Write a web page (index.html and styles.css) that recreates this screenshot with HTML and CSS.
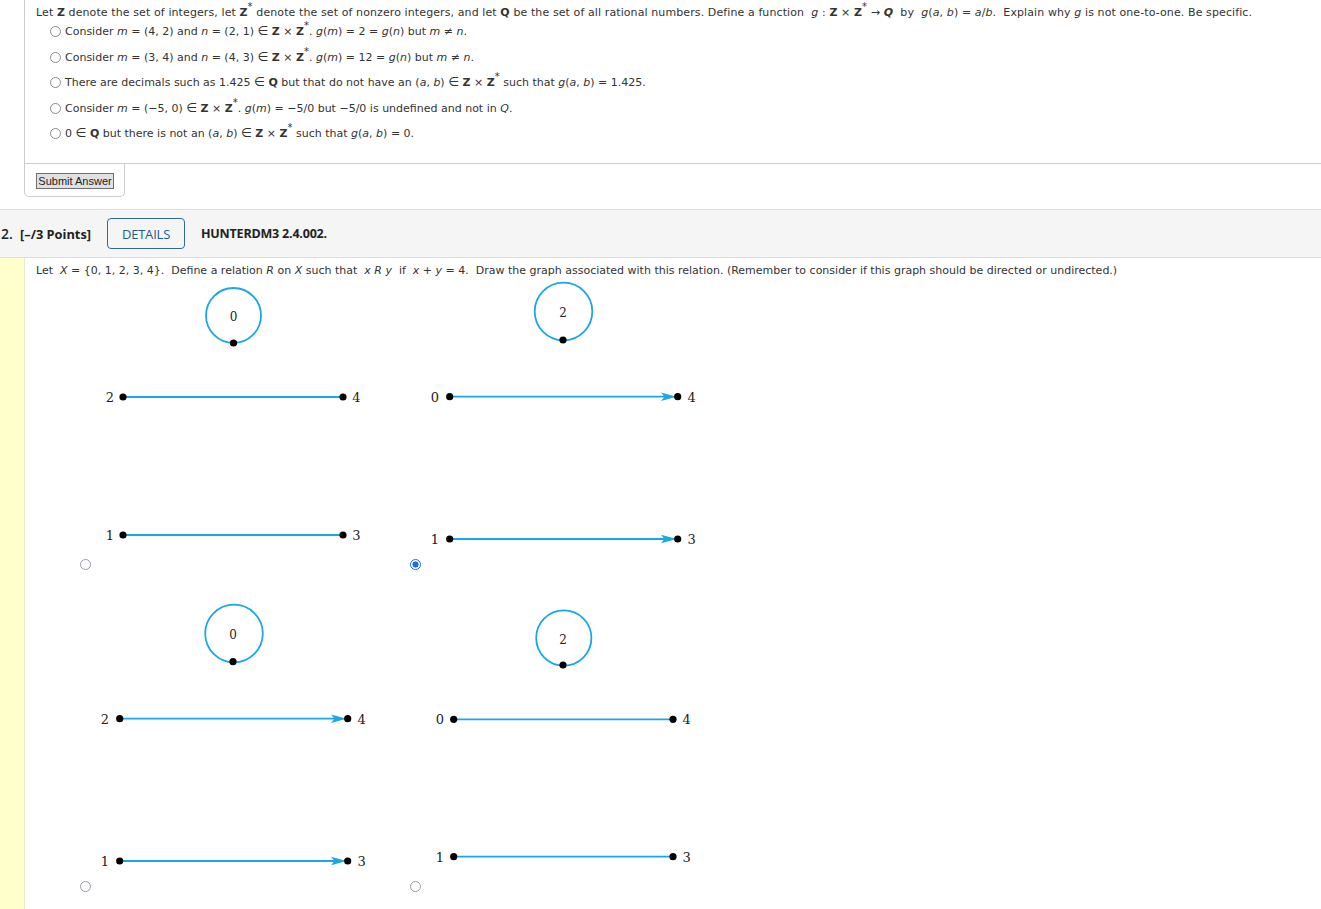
FILE: index.html
```html
<!DOCTYPE html>
<html>
<head>
<meta charset="utf-8">
<link rel="stylesheet" href="styles.css">
</head>
<body>
<div class="q1">
  <div class="q1-body">
    <p class="prompt wide">Let <b>Z</b> denote the set of integers, let <b>Z</b><sup>*</sup> denote the set of nonzero integers, and let <b>Q</b> be the set of all rational numbers. Define a function &nbsp;<i>g</i> : <b>Z</b> × <b>Z</b><sup>*</sup> → <b><i>Q</i></b>&nbsp; by &nbsp;<i>g</i>(<i>a</i>, <i>b</i>) = <i>a</i>/<i>b</i>.&nbsp; Explain why <i>g</i> is not one-to-one. Be specific.</p>
    <ul class="options">
      <li><input type="radio" name="q1" class="radio"><span>Consider <i>m</i> = (4, 2) and <i>n</i> = (2, 1) <span class="in">∈</span> <b>Z</b> × <b>Z</b><sup>*</sup>. <i>g</i>(<i>m</i>) = 2 = <i>g</i>(<i>n</i>) but <i>m</i> ≠ <i>n</i>.</span></li>
      <li><input type="radio" name="q1" class="radio"><span>Consider <i>m</i> = (3, 4) and <i>n</i> = (4, 3) <span class="in">∈</span> <b>Z</b> × <b>Z</b><sup>*</sup>. <i>g</i>(<i>m</i>) = 12 = <i>g</i>(<i>n</i>) but <i>m</i> ≠ <i>n</i>.</span></li>
      <li><input type="radio" name="q1" class="radio"><span>There are decimals such as 1.425 <span class="in">∈</span> <b>Q</b> but that do not have an (<i>a</i>, <i>b</i>) <span class="in">∈</span> <b>Z</b> × <b>Z</b><sup>*</sup> such that <i>g</i>(<i>a</i>, <i>b</i>) = 1.425.</span></li>
      <li><input type="radio" name="q1" class="radio"><span>Consider <i>m</i> = (−5, 0) <span class="in">∈</span> <b>Z</b> × <b>Z</b><sup>*</sup>. <i>g</i>(<i>m</i>) = −5/0 but −5/0 is undefined and not in <i>Q</i>.</span></li>
      <li><input type="radio" name="q1" class="radio"><span>0 <span class="in">∈</span> <b>Q</b> but there is not an (<i>a</i>, <i>b</i>) <span class="in">∈</span> <b>Z</b> × <b>Z</b><sup>*</sup> such that <i>g</i>(<i>a</i>, <i>b</i>) = 0.</span></li>
    </ul>
  </div>
  <div class="submit-box"><button class="submit">Submit Answer</button></div>
</div>

<div class="q2-header">
  <span class="qnum">2.</span>
  <span class="points">[–/3 Points]</span>
  <span class="details">DETAILS</span>
  <span class="code">HUNTERDM3 2.4.002.</span>
</div>

<div class="q2">
  <div class="flag"></div>
  <div class="q2-body">
    <p class="prompt">Let &nbsp;<i>X</i> = {0, 1, 2, 3, 4}.&nbsp; Define a relation <i>R</i> on <i>X</i> such that &nbsp;<i>x R y</i>&nbsp; if &nbsp;<i>x</i> + <i>y</i> = 4.&nbsp; Draw the graph associated with this relation. (Remember to consider if this graph should be directed or undirected.)</p>
    <div class="graphs">
      <div class="cell">
        <svg class="graph" width="330" height="276" viewBox="0 0 330 276">
          <circle class="edge" cx="158.5" cy="35.5" r="27.5"/>
          <circle class="node" cx="158.5" cy="63" r="3.6"/>
          <text class="lbl-in" x="158.5" y="40.5">0</text>
          <line class="edge" x1="48" y1="117" x2="268" y2="117"/>
          <circle class="node" cx="48" cy="117" r="3.6"/>
          <circle class="node" cx="268" cy="117" r="3.6"/>
          <text class="lbl" x="35" y="122">2</text>
          <text class="lbl" x="281.5" y="122">4</text>
          <line class="edge" x1="48" y1="255" x2="268" y2="255"/>
          <circle class="node" cx="48" cy="255" r="3.6"/>
          <circle class="node" cx="268" cy="255" r="3.6"/>
          <text class="lbl" x="35" y="260">1</text>
          <text class="lbl" x="281.5" y="260">3</text>
        </svg>
        <input type="radio" name="q2" class="radio small">
      </div>
      <div class="cell">
        <svg class="graph" width="330" height="276" viewBox="0 0 330 276">
          <circle class="edge" cx="158.5" cy="31.5" r="28.8"/>
          <circle class="node" cx="158" cy="60" r="3.6"/>
          <text class="lbl-in" x="158" y="36.5">2</text>
          <line class="edge" x1="44.7" y1="116.7" x2="262" y2="116.7"/>
          <polygon class="arrow" points="271.5,116.7 256,112.5 259.5,116.7 256,121"/>
          <circle class="node" cx="44.7" cy="116.7" r="3.6"/>
          <circle class="node" cx="272.7" cy="116.7" r="3.6"/>
          <text class="lbl" x="30" y="121.7">0</text>
          <text class="lbl" x="286.7" y="121.7">4</text>
          <line class="edge" x1="44.7" y1="259" x2="262" y2="259"/>
          <polygon class="arrow" points="271.5,259 256,254.8 259.5,259 256,263.3"/>
          <circle class="node" cx="44.7" cy="259" r="3.6"/>
          <circle class="node" cx="272.7" cy="259" r="3.6"/>
          <text class="lbl" x="30" y="264">1</text>
          <text class="lbl" x="286.7" y="264">3</text>
        </svg>
        <input type="radio" name="q2" class="radio small" checked>
      </div>
      <div class="cell">
        <svg class="graph" width="330" height="276" viewBox="0 0 330 276">
          <circle class="edge" cx="159" cy="31.5" r="28.8"/>
          <circle class="node" cx="158" cy="59.7" r="3.6"/>
          <text class="lbl-in" x="158" y="36.5">0</text>
          <line class="edge" x1="44.7" y1="116.7" x2="262" y2="116.7"/>
          <polygon class="arrow" points="271.5,116.7 256,112.5 259.5,116.7 256,121"/>
          <circle class="node" cx="44.7" cy="116.7" r="3.6"/>
          <circle class="node" cx="272.7" cy="116.7" r="3.6"/>
          <text class="lbl" x="30" y="121.7">2</text>
          <text class="lbl" x="286.7" y="121.7">4</text>
          <line class="edge" x1="44.7" y1="259" x2="262" y2="259"/>
          <polygon class="arrow" points="271.5,259 256,254.8 259.5,259 256,263.3"/>
          <circle class="node" cx="44.7" cy="259" r="3.6"/>
          <circle class="node" cx="272.7" cy="259" r="3.6"/>
          <text class="lbl" x="30" y="264">1</text>
          <text class="lbl" x="286.7" y="264">3</text>
        </svg>
        <input type="radio" name="q2" class="radio small">
      </div>
      <div class="cell">
        <svg class="graph" width="330" height="276" viewBox="0 0 330 276">
          <circle class="edge" cx="158.8" cy="36" r="27.6"/>
          <circle class="node" cx="158" cy="63" r="3.6"/>
          <text class="lbl-in" x="158" y="41.5">2</text>
          <line class="edge" x1="48.7" y1="117.3" x2="268" y2="117.3"/>
          <circle class="node" cx="48.7" cy="117.3" r="3.6"/>
          <circle class="node" cx="268" cy="117.3" r="3.6"/>
          <text class="lbl" x="35" y="122.3">0</text>
          <text class="lbl" x="281.7" y="122.3">4</text>
          <line class="edge" x1="48.7" y1="254.7" x2="268" y2="254.7"/>
          <circle class="node" cx="48.7" cy="254.7" r="3.6"/>
          <circle class="node" cx="268" cy="254.7" r="3.6"/>
          <text class="lbl" x="35" y="259.7">1</text>
          <text class="lbl" x="281.7" y="259.7">3</text>
        </svg>
        <input type="radio" name="q2" class="radio small">
      </div>
    </div>
  </div>
</div>
</body>
</html>
```

FILE: styles.css
```css
* { box-sizing: border-box; }
html, body { margin: 0; padding: 0; background: #fff; }
body {
  font-family: "DejaVu Sans", Verdana, sans-serif;
  font-size: 11px;
  color: #333;
  width: 1321px;
  overflow: hidden;
}
b { font-weight: bold; }
sup {
  font-size: 10px;
  line-height: 0;
  vertical-align: 6px;
}
.in {
  font-size: 12.5px;
  line-height: 0;
}

.q1-body {
  margin-left: 24px;
  border-left: 1px solid #ccc;
  border-bottom: 1px solid #ccc;
  padding: 6px 0 16px 11px;
  height: 164px;
}
.prompt {
  margin: 0;
  line-height: 14px;
  white-space: nowrap;
}
.prompt.wide { letter-spacing: 0.1px; }
.options {
  list-style: none;
  margin: -1px 0 0 0;
  padding: 0 0 0 14px;
}
.options li {
  display: flex;
  align-items: center;
  height: 25.5px;
  white-space: nowrap;
}
.radio {
  appearance: none;
  -webkit-appearance: none;
  width: 11px;
  height: 11px;
  margin: 0 4px 0 0;
  border: 1px solid #8a8a8a;
  border-radius: 50%;
  background: #fff;
  flex: none;
}
.radio:checked {
  border: 1.5px solid #1a6fe0;
  background: radial-gradient(circle, #1a6fe0 0, #1a6fe0 2.8px, #fff 3.3px);
}

.submit-box {
  margin-left: 24px;
  width: 101px;
  height: 33px;
  border: 1px solid #ccc;
  border-top: none;
  border-radius: 0 0 5px 5px;
  padding: 9px 0 0 11px;
}
.submit {
  display: block;
  width: 78px;
  height: 16px;
  padding: 0;
  margin: 0;
  border: 1px solid #6e6e6e;
  background: #e1e1e1;
  font-family: "Liberation Sans", Arial, sans-serif;
  font-size: 11px;
  color: #222;
  line-height: 14px;
  text-align: center;
}

.q2-header {
  margin-top: 12px;
  height: 49px;
  background: #f5f5f5;
  border-top: 1px solid #ddd;
  border-bottom: 1px solid #ddd;
  display: flex;
  align-items: center;
  font-family: "Open Sans", sans-serif;
  color: #222;
}
.qnum {
  font-size: 14px;
  font-weight: 600;
  margin-left: 1px;
  width: 19px;
}
.points {
  font-size: 12.8px;
  font-weight: 700;
  width: 87px;
}
.details {
  display: flex;
  align-items: center;
  justify-content: center;
  width: 78px;
  height: 31px;
  border: 1px solid #2c6aa0;
  border-radius: 4px;
  color: #1d5c94;
  font-size: 13px;
  letter-spacing: -0.2px;
}
.code {
  margin-left: 16px;
  font-size: 12.5px;
  font-weight: 700;
  letter-spacing: -0.2px;
}

.q2 {
  display: flex;
  height: 651px;
}
.flag {
  width: 25px;
  flex: none;
  background: #ffffcc;
  border-right: 1px solid #ecebc8;
}
.q2-body {
  flex: 1;
  padding: 6px 0 0 11px;
}
.graphs {
  margin: 2px 0 0 39px;
  display: grid;
  grid-template-columns: 330px 330px;
  row-gap: 32px;
}
.cell {
  display: flex;
  flex-direction: column;
}
.graph { display: block; }
.radio.small {
  width: 11px;
  height: 11px;
  margin: 3px 0 0 5px;
  border-color: #9a9aa8;
}
.radio.small:checked { border-color: #1a6fe0; }

.edge {
  fill: none;
  stroke: #1aa7e8;
  stroke-width: 1.8;
}
.arrow { fill: #1aa7e8; }
.node { fill: #000; }
.lbl, .lbl-in {
  font-family: "DejaVu Serif", "Liberation Serif", serif;
  fill: #222;
  text-anchor: middle;
}
.lbl { font-size: 13px; }
.lbl-in { font-size: 12px; }
```
